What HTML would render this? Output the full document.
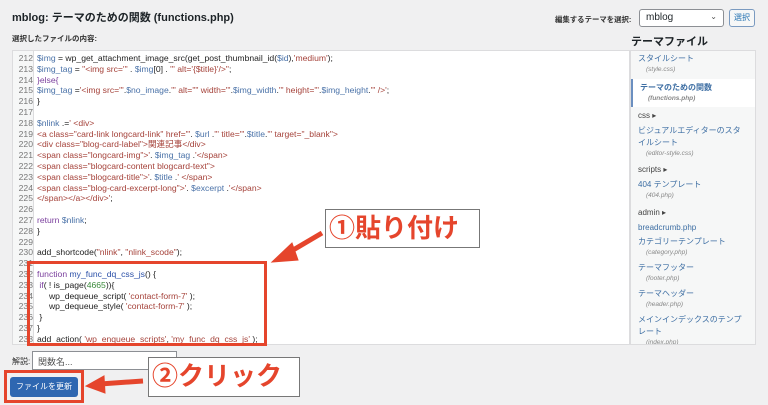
<!DOCTYPE html>
<html><head><meta charset="utf-8"><style>
*{margin:0;padding:0;box-sizing:border-box}
body{width:768px;height:405px;background:#f0f0f1;font-family:"Liberation Sans","Noto Sans CJK JP",sans-serif;position:relative;overflow:hidden;color:#1d2327}
.a{position:absolute}
h1{position:absolute;left:12px;top:9px;font-size:11px;font-weight:bold;color:#1d2327}
.code{position:absolute;left:12px;top:50px;width:618px;height:295px;background:#fff;border:1px solid #dcdcde}
.gut{position:absolute;left:0;top:0;width:21px;height:100%;background:#f6f7f7;border-right:1px solid #dcdcde}
.ln{position:absolute;left:0;font-size:8.6px;line-height:10.8px;color:#777;width:20px;text-align:right}
.tx{position:absolute;left:24px;font-size:8.6px;line-height:10.8px;white-space:pre;color:#222}
.v{color:#4a72a8}.s{color:#a5423a}.k{color:#7a3e9d}.n{color:#3a8a3a}.f{color:#2a4fa8}
.side{position:absolute;left:630px;top:50px;width:126px;height:295px;background:#f6f7f7;border:1px solid #dcdcde;font-size:8px;line-height:12px;overflow:hidden}
.side div{padding:0 7px}
.l{color:#3d6ea3}.fi{color:#888;font-style:italic;font-size:6.5px;line-height:10px;padding-left:15px!important}
.red{border:3px solid #e5452c;position:absolute}
.lab{position:absolute;background:#fff;border:1px solid #777;color:#e5452c;font-weight:bold;font-size:26px;line-height:36px;white-space:nowrap}
</style></head><body>
<h1>mblog: テーマのための関数 (functions.php)</h1>
<div class="a" style="left:12px;top:33px;font-size:7.5px;font-weight:bold;color:#333">選択したファイルの内容:</div>
<div class="a" style="left:555px;top:14px;font-size:7.4px;font-weight:bold;color:#333">編集するテーマを選択:</div>
<div class="a" style="left:639px;top:9px;width:85px;height:18px;background:#fff;border:1px solid #8c8f94;border-radius:3px;font-size:10px;padding:2px 6px">mblog<span style="position:absolute;right:6px;top:2px;font-size:8px;color:#555">⌄</span></div>
<div class="a" style="left:729px;top:9px;width:26px;height:18px;border:1px solid #7a9ac0;border-radius:3px;font-size:8px;color:#2271b1;text-align:center;line-height:16px;background:#f6f7f7">選択</div>
<div class="a" style="left:631px;top:33px;font-size:11px;font-weight:bold">テーマファイル</div>
<div class="code"><div class="gut"></div>
<div class="ln" style="top:2px">212<br>213<br>214<br>215<br>216<br>217<br>218<br>219<br>220<br>221<br>222<br>223<br>224<br>225<br>226<br>227<br>228<br>229<br>230<br>231<br>232<br>233<br>234<br>235<br>236<br>237<br>238</div>
<div class="tx" style="top:2px"><span class="v">$img</span> = wp_get_attachment_image_src(get_post_thumbnail_id(<span class="v">$id</span>),<span class="s">'medium'</span>);
<span class="v">$img_tag</span> = <span class="s">"&lt;img src='"</span> . <span class="v">$img</span>[0] . <span class="s">"' alt='{$title}'/&gt;"</span>;
<span class="k">}else{</span>
<span class="v">$img_tag</span> =<span class="s">'&lt;img src="'</span>.<span class="v">$no_image</span>.<span class="s">'" alt="" width="'</span>.<span class="v">$img_width</span>.<span class="s">'" height="'</span>.<span class="v">$img_height</span>.<span class="s">'" /&gt;'</span>;
}

<span class="v">$nlink</span> .=<span class="s">' &lt;div&gt;</span>
<span class="s">&lt;a class="card-link longcard-link" href="'</span>. <span class="v">$url</span> .<span class="s">'" title="'</span>.<span class="v">$title</span>.<span class="s">'" target="_blank"&gt;</span>
<span class="s">&lt;div class="blog-card-label"&gt;関連記事&lt;/div&gt;</span>
<span class="s">&lt;span class="longcard-img"&gt;'</span>. <span class="v">$img_tag</span> .<span class="s">'&lt;/span&gt;</span>
<span class="s">&lt;span class="blogcard-content blogcard-text"&gt;</span>
<span class="s">&lt;span class="blogcard-title"&gt;'</span>. <span class="v">$title</span> .<span class="s">' &lt;/span&gt;</span>
<span class="s">&lt;span class="blog-card-excerpt-long"&gt;'</span>. <span class="v">$excerpt</span> .<span class="s">'&lt;/span&gt;</span>
<span class="s">&lt;/span&gt;&lt;/a&gt;&lt;/div&gt;'</span>;

<span class="k">return</span> <span class="v">$nlink</span>;
}

add_shortcode(<span class="s">"nlink"</span>, <span class="s">"nlink_scode"</span>);

<span class="k">function</span> <span class="f">my_func_dq_css_js</span>() {
 <span class="k">if</span>( ! is_page(<span class="n">4665</span>)){
     wp_dequeue_script( <span class="s">'contact-form-7'</span> );
     wp_dequeue_style( <span class="s">'contact-form-7'</span> );
 }
}
add_action( <span class="s">'wp_enqueue_scripts'</span>, <span class="s">'my_func_dq_css_js'</span> );</div>
</div>
<div class="side">
<div class="l" style="margin-top:2px">スタイルシート</div><div class="fi" style="margin-bottom:4px">(style.css)</div>
<div style="background:#fff;border-left:2px solid #6b8fc0;padding:3px 7px;margin-bottom:3px;height:28px"><div class="l" style="padding:0;font-weight:bold">テーマのための関数</div><div class="fi" style="padding-left:8px!important;font-weight:bold">(functions.php)</div></div>
<div style="color:#444;margin:3px 0">css ▸</div>
<div class="l">ビジュアルエディターのスタイルシート</div><div class="fi" style="margin-bottom:5px">(editor-style.css)</div>
<div style="color:#444;margin-bottom:3px">scripts ▸</div>
<div class="l">404 テンプレート</div><div class="fi" style="margin-bottom:6px">(404.php)</div>
<div style="color:#444;margin-bottom:3px">admin ▸</div>
<div class="l" style="margin-bottom:2px">breadcrumb.php</div>
<div class="l">カテゴリーテンプレート</div><div class="fi" style="margin-bottom:4px">(category.php)</div>
<div class="l">テーマフッター</div><div class="fi" style="margin-bottom:4px">(footer.php)</div>
<div class="l">テーマヘッダー</div><div class="fi" style="margin-bottom:4px">(header.php)</div>
<div class="l">メインインデックスのテンプレート</div><div class="fi">(index.php)</div>
</div>
<div class="a" style="left:12px;top:356px;font-size:8px;color:#333">解説:</div>
<div class="a" style="left:32px;top:351px;width:145px;height:19px;background:#fff;border:1px solid #8c8f94;font-size:9px;padding:3px 5px;color:#555">関数名...</div>
<div class="red" style="left:27px;top:261px;width:240px;height:85px"></div>
<div class="red" style="left:4px;top:370px;width:80px;height:33px"></div>
<div class="a" style="left:10px;top:377px;width:68px;height:20px;background:#2e67b1;border-radius:3px;color:#fff;font-size:8px;text-align:center;line-height:20px">ファイルを更新</div>
<div class="lab" style="left:325px;top:209px;width:155px;height:39px;padding-left:3px">①貼り付け</div>
<div class="lab" style="left:148px;top:357px;width:152px;height:40px;padding-left:3px">②クリック</div>
<svg class="a" style="left:0;top:0" width="768" height="405"><g fill="#e5452c" stroke="#e5452c">
<line x1="322" y1="233" x2="288" y2="253" stroke-width="5"/><polygon points="272,262 292,243 298,260"/>
<line x1="143" y1="381" x2="100" y2="384" stroke-width="5"/><polygon points="86,386 104,376 105,393"/></g></svg>
</body></html>
